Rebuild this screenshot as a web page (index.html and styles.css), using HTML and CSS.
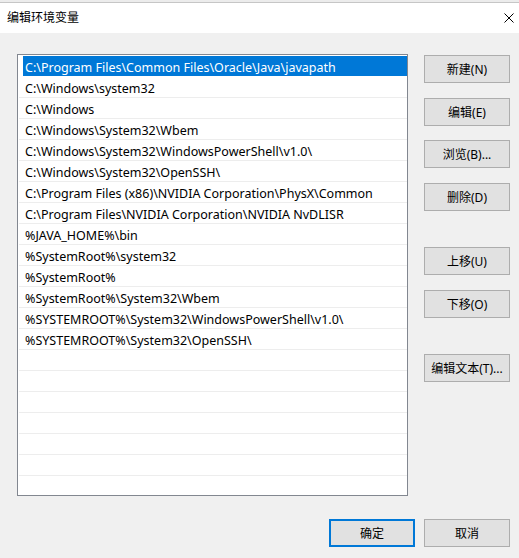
FILE: index.html
```html
<!DOCTYPE html>
<html lang="zh-CN">
<head>
<meta charset="utf-8">
<title>编辑环境变量</title>
<link rel="stylesheet" href="styles.css">
</head>
<body>
<div class="window">
  <div class="topstrip"></div>
  <div class="titlebar">
    <span class="title">编辑环境变量</span>
    <svg class="close" width="10" height="10" viewBox="0 0 10 10"><path d="M0.5 0.5 L9.5 9.5 M9.5 0.5 L0.5 9.5" stroke="#000" stroke-width="1" fill="none"/></svg>
  </div>
  <div class="content">
    <div class="main">
      <div class="list">
        <div class="row selected">C:\Program Files\Common Files\Oracle\Java\javapath</div>
        <div class="row">C:\Windows\system32</div>
        <div class="row">C:\Windows</div>
        <div class="row">C:\Windows\System32\Wbem</div>
        <div class="row">C:\Windows\System32\WindowsPowerShell\v1.0\</div>
        <div class="row">C:\Windows\System32\OpenSSH\</div>
        <div class="row">C:\Program Files (x86)\NVIDIA Corporation\PhysX\Common</div>
        <div class="row">C:\Program Files\NVIDIA Corporation\NVIDIA NvDLISR</div>
        <div class="row">%JAVA_HOME%\bin</div>
        <div class="row">%SystemRoot%\system32</div>
        <div class="row">%SystemRoot%</div>
        <div class="row">%SystemRoot%\System32\Wbem</div>
        <div class="row">%SYSTEMROOT%\System32\WindowsPowerShell\v1.0\</div>
        <div class="row">%SYSTEMROOT%\System32\OpenSSH\</div>
        <div class="row"></div>
        <div class="row"></div>
        <div class="row"></div>
        <div class="row"></div>
        <div class="row"></div>
        <div class="row"></div>
        <div class="row"></div>
      </div>
      <div class="side">
        <button class="btn">新建(N)</button>
        <button class="btn">编辑(E)</button>
        <button class="btn">浏览(B)...</button>
        <button class="btn">删除(D)</button>
        <button class="btn sep">上移(U)</button>
        <button class="btn">下移(O)</button>
        <button class="btn sep">编辑文本(T)...</button>
      </div>
    </div>
    <div class="footer">
      <button class="btn default">确定</button>
      <button class="btn">取消</button>
    </div>
  </div>
</div>
</body>
</html>
```
FILE: styles.css
```css
* { box-sizing: border-box; }
html, body { margin: 0; padding: 0; }
body {
  width: 519px;
  height: 558px;
  overflow: hidden;
  background: #f0f0f0;
  font-family: "Segoe UI", "Noto Sans", "Noto Sans CJK SC", sans-serif;
  font-size: 12px;
  color: #000;
}
.window {
  width: 519px;
  height: 558px;
  display: flex;
  flex-direction: column;
}
.topstrip {
  height: 3px;
  background: #ececec;
  border-bottom: 1px solid #c6c6c6;
}
.titlebar {
  height: 30px;
  background: #fff;
  display: flex;
  align-items: center;
  justify-content: space-between;
  padding: 0 5px 0 7px;
}
.title {
  font-size: 12px;
  line-height: 14px;
}
.close { display: block; }
.content {
  padding: 21px 9px 0 17px;
  display: flex;
  flex-direction: column;
}
.main {
  display: flex;
  height: 442px;
}
.list {
  width: 391px;
  height: 442px;
  background: #fff;
  border: 1px solid #828790;
  padding-top: 1px;
  overflow: hidden;
}
.row {
  height: 21px;
  line-height: 20px;
  padding-top: 2px;
  margin-left: 1px;
  padding-left: 6px;
  border-bottom: 1px solid #ededed;
  white-space: nowrap;
  font-size: 12.5px;
}
.row.selected {
  margin-left: 5px;
  padding-left: 2px;
  background: #0078d7;
  color: #fff;
  border-bottom-color: #fff;
}
.side {
  margin-left: 16px;
  width: 86px;
  padding-top: 1px;
  display: flex;
  flex-direction: column;
  gap: 14.67px;
}
.btn {
  width: 86px;
  height: 28px;
  background: #e1e1e1;
  border: 1px solid #adadad;
  font-family: inherit;
  font-size: 12px;
  color: #000;
  padding: 0;
  margin: 0;
  white-space: nowrap;
}
.side .sep { margin-top: 21.33px; }
.footer {
  margin-top: 23px;
  display: flex;
  justify-content: flex-end;
  gap: 9px;
}
.btn.default {
  border: 2px solid #0078d7;
}
```
